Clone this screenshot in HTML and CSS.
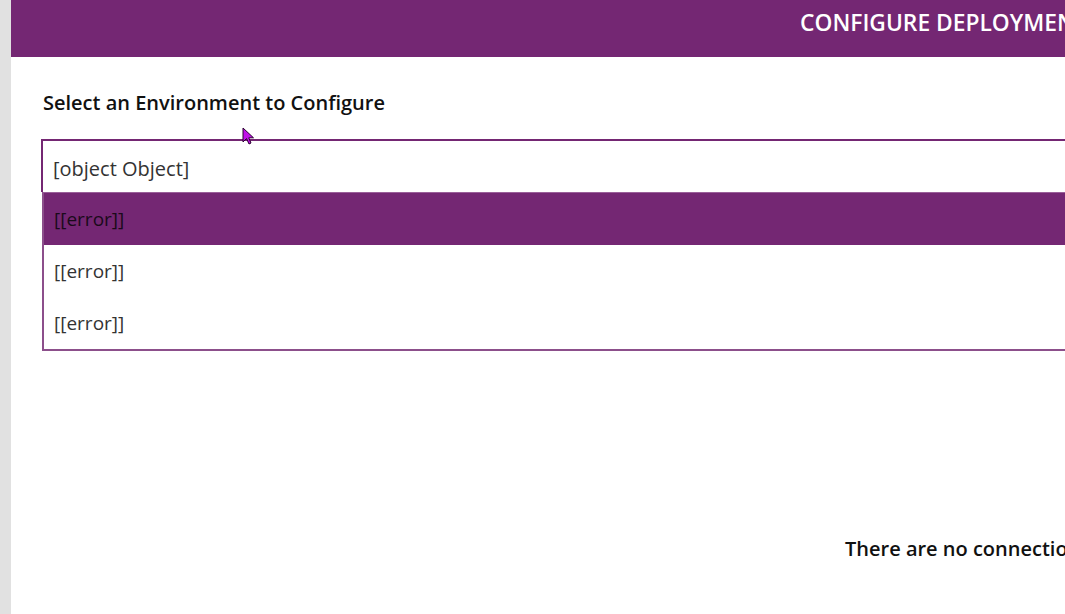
FILE: index.html
```html
<!DOCTYPE html>
<html lang="en">

<head>
	<meta charset="utf-8">
	<meta name="viewport" content="width=device-width, initial-scale=1">
	<title>Configure Deployment</title>
	<link rel="stylesheet" href="styles.css">
</head>

<body>
	<div class="side-rail"></div>

	<div class="page">
		<header class="top-bar">
			<h1>CONFIGURE DEPLOYMENT</h1>
		</header>

		<section class="env-picker">
			<h2>Select an Environment to Configure</h2>

			<div class="combo">
				<div class="combo-value">[object Object]</div>
				<ul class="combo-list">
					<li class="selected">[[error]]</li>
					<li>[[error]]</li>
					<li>[[error]]</li>
				</ul>
			</div>
		</section>

		<p class="empty-note">There are no connections configured for this environment.</p>
	</div>

	<!-- pointer -->
	<svg class="pointer" width="14" height="20" viewBox="0 0 14 20">
		<path d="M1 1 L1 15 L4.5 11.5 L7 17 L9 16 L6.8 10.8 L11.5 10.8 Z" fill="#c010e8" stroke="#2a0030" stroke-width="1"
			stroke-linejoin="round" />
	</svg>
</body>

</html>
```

FILE: styles.css
```css
* {
	box-sizing: border-box;
}

html,
body {
	height: 100%;
	margin: 0;
	padding: 0;
	overflow: hidden;
}

body {
	display: flex;
	background-color: #ffffff;
	color: #1b1b1b;
	font-family: "Open Sans", "Noto Sans", sans-serif;
}

.side-rail {
	flex: none;
	width: 11px;
	background-color: #e1e1e1;
}

.page {
	flex: none;
	width: 1800px;
}

.top-bar {
	height: 57px;
	background-color: #742773;
	padding: 8px 0 0 789px;
}

.top-bar h1 {
	margin: 0;
	color: #ffffff;
	font-size: 22.8px;
	font-weight: 600;
	line-height: 30px;
}

.env-picker {
	padding: 32px 0 0 32px;
}

.env-picker h2 {
	margin: 0;
	font-size: 20px;
	font-weight: 600;
	line-height: 28px;
	color: #111111;
}

.combo {
	margin-top: 22px;
	margin-left: -2px;
	width: 1400px;
}

.combo-value {
	height: 53px;
	border: 2px solid #742773;
	border-bottom: none;
	border-right: none;
	padding: 3px 10px 0;
	display: flex;
	align-items: center;
	font-size: 20px;
	color: #333333;
}

.combo-list {
	list-style: none;
	margin: 0 0 0 1px;
	padding: 0;
	border: 2px solid #8c4f8b;
	border-top: 1px solid #9a5f99;
	border-right: none;
}

.combo-list li {
	height: 52px;
	padding: 0 10px;
	display: flex;
	align-items: center;
	font-size: 19px;
	color: #333333;
}

.combo-list li.selected {
	background-color: #742773;
	color: #1a0a1a;
}

.empty-note {
	margin: 184px 0 0 834px;
	font-size: 20px;
	font-weight: 600;
	color: #111111;
	white-space: nowrap;
}

.pointer {
	position: absolute;
	left: 242px;
	top: 127px;
}
```
